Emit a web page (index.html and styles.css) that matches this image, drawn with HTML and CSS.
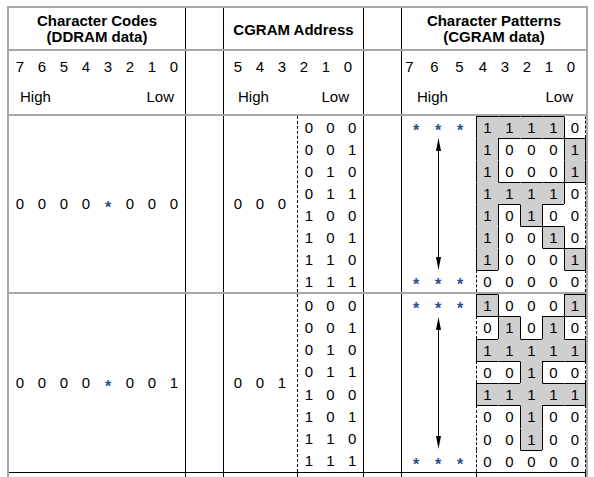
FILE: index.html
```html
<!DOCTYPE html>
<html lang="en">
<head>
<meta charset="utf-8">
<title>CGRAM character patterns</title>
<link rel="stylesheet" href="styles.css">
</head>
<body>
<div class="table">
  <div class="row head1">
    <div class="cell c1 title"><span>Character Codes</span><span>(DDRAM data)</span></div>
    <div class="cell c2"></div>
    <div class="cell c3 title single"><span>CGRAM Address</span></div>
    <div class="cell c4"></div>
    <div class="cell c5 title"><span>Character Patterns</span><span>(CGRAM data)</span></div>
  </div>

  <div class="row head2">
    <div class="cell c1 hcell">
      <div class="bits b8"><span>7</span><span>6</span><span>5</span><span>4</span><span>3</span><span>2</span><span>1</span><span>0</span></div>
      <div class="hilo"><span>High</span><span>Low</span></div>
    </div>
    <div class="cell c2"></div>
    <div class="cell c3 hcell">
      <div class="bits b6"><span>5</span><span>4</span><span>3</span><span>2</span><span>1</span><span>0</span></div>
      <div class="hilo"><span>High</span><span>Low</span></div>
    </div>
    <div class="cell c4"></div>
    <div class="cell c5 hcell">
      <div class="bits bp"><span>7</span><span>6</span><span>5</span><span>4</span><span>3</span><span>2</span><span>1</span><span>0</span></div>
      <div class="hilo"><span>High</span><span>Low</span></div>
    </div>
  </div>

  <!-- Block 1 : character code 0000*000 -->
  <div class="row block blk1">
    <div class="cell c1 mid">
      <div class="bits b8"><span>0</span><span>0</span><span>0</span><span>0</span><span class="ast">*</span><span>0</span><span>0</span><span>0</span></div>
    </div>
    <div class="cell c2"></div>
    <div class="cell c3 addr">
      <div class="upper"><div class="bits b3"><span>0</span><span>0</span><span>0</span></div></div>
      <div class="lower">
        <span>0</span><span>0</span><span>0</span>
        <span>0</span><span>0</span><span>1</span>
        <span>0</span><span>1</span><span>0</span>
        <span>0</span><span>1</span><span>1</span>
        <span>1</span><span>0</span><span>0</span>
        <span>1</span><span>0</span><span>1</span>
        <span>1</span><span>1</span><span>0</span>
        <span>1</span><span>1</span><span>1</span>
      </div>
    </div>
    <div class="cell c4"></div>
    <div class="cell c5 patcell">
      <div class="stars">
        <span class="ast">*</span><span class="ast">*</span><span class="ast">*</span>
        <div class="arrow"><svg width="11" height="132" viewBox="0 0 11 132"><line x1="5.5" y1="10" x2="5.5" y2="122" stroke="#000" stroke-width="1"/><polygon points="5.5,0 3,13 8,13" fill="#000"/><polygon points="5.5,132 3,119 8,119" fill="#000"/></svg></div>
        <span class="ast s8a">*</span><span class="ast s8b">*</span><span class="ast s8c">*</span>
      </div>
      <div class="pat">
        <span class="p g t l">1</span><span class="p g t">1</span><span class="p g t">1</span><span class="p g t">1</span><span class="p l rd">0</span>
        <span class="p g l">1</span><span class="p t l">0</span><span class="p t">0</span><span class="p t">0</span><span class="p g t l r">1</span>
        <span class="p g l">1</span><span class="p l">0</span><span class="p">0</span><span class="p">0</span><span class="p g l r">1</span>
        <span class="p g l">1</span><span class="p g t">1</span><span class="p g t">1</span><span class="p g t">1</span><span class="p t l rd">0</span>
        <span class="p g l">1</span><span class="p t l">0</span><span class="p g l">1</span><span class="p t l">0</span><span class="p rd">0</span>
        <span class="p g l">1</span><span class="p l">0</span><span class="p t">0</span><span class="p g t l">1</span><span class="p l rd">0</span>
        <span class="p g l">1</span><span class="p l">0</span><span class="p">0</span><span class="p t">0</span><span class="p g t l r">1</span>
        <span class="p t d">0</span><span class="p">0</span><span class="p">0</span><span class="p">0</span><span class="p t rd">0</span>
      </div>
    </div>
  </div>

  <!-- Block 2 : character code 0000*001 -->
  <div class="row block blk2">
    <div class="cell c1 mid">
      <div class="bits b8"><span>0</span><span>0</span><span>0</span><span>0</span><span class="ast">*</span><span>0</span><span>0</span><span>1</span></div>
    </div>
    <div class="cell c2"></div>
    <div class="cell c3 addr">
      <div class="upper"><div class="bits b3"><span>0</span><span>0</span><span>1</span></div></div>
      <div class="lower">
        <span>0</span><span>0</span><span>0</span>
        <span>0</span><span>0</span><span>1</span>
        <span>0</span><span>1</span><span>0</span>
        <span>0</span><span>1</span><span>1</span>
        <span>1</span><span>0</span><span>0</span>
        <span>1</span><span>0</span><span>1</span>
        <span>1</span><span>1</span><span>0</span>
        <span>1</span><span>1</span><span>1</span>
      </div>
    </div>
    <div class="cell c4"></div>
    <div class="cell c5 patcell">
      <div class="stars">
        <span class="ast">*</span><span class="ast">*</span><span class="ast">*</span>
        <div class="arrow"><svg width="11" height="132" viewBox="0 0 11 132"><line x1="5.5" y1="10" x2="5.5" y2="122" stroke="#000" stroke-width="1"/><polygon points="5.5,0 3,13 8,13" fill="#000"/><polygon points="5.5,132 3,119 8,119" fill="#000"/></svg></div>
        <span class="ast s8a">*</span><span class="ast s8b">*</span><span class="ast s8c">*</span>
      </div>
      <div class="pat">
        <span class="p g t l">1</span><span class="p l">0</span><span class="p">0</span><span class="p">0</span><span class="p g t l r">1</span>
        <span class="p t d">0</span><span class="p g t l">1</span><span class="p l">0</span><span class="p g t l">1</span><span class="p t l rd">0</span>
        <span class="p g t l">1</span><span class="p g">1</span><span class="p g t">1</span><span class="p g">1</span><span class="p g t r">1</span>
        <span class="p t d">0</span><span class="p t">0</span><span class="p g l">1</span><span class="p t l">0</span><span class="p t rd">0</span>
        <span class="p g t l">1</span><span class="p g t">1</span><span class="p g">1</span><span class="p g t">1</span><span class="p g t r">1</span>
        <span class="p t d">0</span><span class="p t">0</span><span class="p g l">1</span><span class="p t l">0</span><span class="p t rd">0</span>
        <span class="p d">0</span><span class="p">0</span><span class="p g l">1</span><span class="p l">0</span><span class="p rd">0</span>
        <span class="p d">0</span><span class="p">0</span><span class="p t">0</span><span class="p">0</span><span class="p rd">0</span>
      </div>
    </div>
  </div>

  <!-- Block 3 : continues below the visible area -->
  <div class="row block blk3">
    <div class="cell c1"></div>
    <div class="cell c2"></div>
    <div class="cell c3 addr">
      <div class="upper"></div>
      <div class="lower"></div>
    </div>
    <div class="cell c4"></div>
    <div class="cell c5 patcell">
      <div class="stars"></div>
      <div class="pat blank"></div>
    </div>
  </div>
</div>
</body>
</html>
```

FILE: styles.css
```css
* { box-sizing: border-box; }

html, body {
  margin: 0;
  padding: 0;
  background: #fff;
  overflow: hidden;
}

body {
  font-family: "Liberation Sans", Arial, sans-serif;
  font-size: 15px;
  color: #000;
}

.table {
  margin: 6px 0 0 7px;
  width: 581px;
  border: 2px solid #a8a8a8;
  border-bottom: 0;
}

.row {
  display: grid;
  grid-template-columns: 176px 38px 140px 38px 185px;
  grid-template-rows: minmax(0, 1fr);
  border-bottom: 2px solid #a8a8a8;
}

.cell + .cell { border-left: 1px solid #000; }

.head1 { height: 43px; }
.head2 { height: 65px; }
.block { height: 178px; }
.block.blk2 { height: 179px; border-bottom: 1px solid #000; }
.block.blk3 { height: 4px; border-bottom: 0; }

/* header titles */
.title {
  display: flex;
  flex-direction: column;
  align-items: center;
  justify-content: center;
  font-weight: bold;
  line-height: 16px;
}
.title.single { padding-top: 3px; }

/* bit number headers */
.hcell {
  display: flex;
  flex-direction: column;
  gap: 8px;
  padding-top: 5px;
}

.bits {
  display: grid;
  line-height: 22px;
  text-align: center;
}
.b8 { grid-template-columns: repeat(8, 22px); }
.b6 { grid-template-columns: repeat(6, 22px); padding-left: 3px; }
.bp { grid-template-columns: repeat(3, 25px) repeat(5, 22px); margin-left: -5px; }
.b3 { grid-template-columns: repeat(3, 22px); }

.hilo {
  display: flex;
  justify-content: space-between;
  line-height: 22px;
}
.c1 .hilo { padding: 0 11px; }
.c3 .hilo { padding: 0 14px; }
.c5 .hilo { padding: 0 13px 0 15px; }

/* data blocks */
.mid {
  display: flex;
  align-items: center;
}

.ast {
  color: #2b4f8c;
  font-size: 16px;
  font-weight: bold;
  line-height: 22px;
  transform: translateY(4px);
}

.addr { display: flex; }

.upper {
  flex: 1;
  display: flex;
  align-items: center;
  padding-left: 3px;
}

.lower {
  width: 66px;
  border-left: 1px dashed #000;
  display: grid;
  grid-template-columns: repeat(3, 1fr);
  grid-template-rows: repeat(8, minmax(0, 1fr));
  align-items: center;
  text-align: center;
}

.patcell { display: flex; }

.stars {
  width: 74px;
  padding-left: 3px;
  display: grid;
  grid-template-columns: repeat(3, 22px);
  grid-template-rows: repeat(8, minmax(0, 1fr));
}
.stars > .ast {
  display: flex;
  align-items: center;
  justify-content: center;
}
.stars .s8a { grid-row: 8; grid-column: 1; }
.stars .s8b { grid-row: 8; grid-column: 2; }
.stars .s8c { grid-row: 8; grid-column: 3; }

.arrow {
  grid-column: 2;
  grid-row: 2 / 8;
  display: flex;
  align-items: center;
  justify-content: center;
}
.arrow svg { display: block; }

.pat {
  width: 110px;
  display: grid;
  grid-template-columns: repeat(5, 22px);
  grid-template-rows: repeat(8, minmax(0, 1fr));
}
.pat.blank {
  border-left: 1px dashed #000;
  border-right: 1px dashed #000;
}

.p {
  display: flex;
  align-items: center;
  justify-content: center;
  border-top: 1px solid transparent;
  border-left: 1px solid transparent;
}
.p:nth-child(5n) { border-right: 1px solid transparent; }

.p.g { background: #cfcfcf; }
.p.t { border-top-color: #000; }
.p.l { border-left-color: #000; }
.p.d { border-left: 1px dashed #000; }
.p.r { border-right-color: #000; }
.p.rd { border-right: 1px dashed #000; }
```
